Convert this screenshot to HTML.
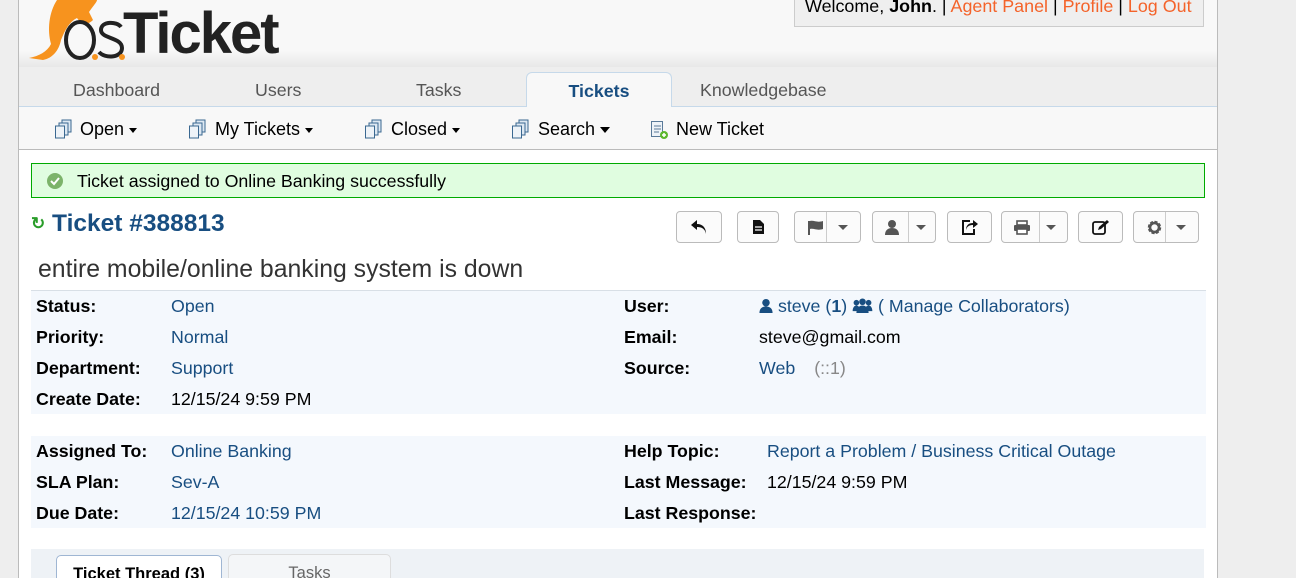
<!DOCTYPE html>
<html><head><meta charset="utf-8"><style>
*{margin:0;padding:0;box-sizing:border-box}
html,body{width:1296px;height:578px;overflow:hidden}
body{background:#eee;font-family:"Liberation Sans",Arial,sans-serif;font-size:17.8px;color:#000;position:relative}
.a{position:absolute}
#c{left:18px;top:0;width:1200px;height:578px;background:#fff;border-left:1px solid #bbb;border-right:1px solid #bbb;overflow:hidden}
#hd{left:0;top:0;width:1198px;height:67px;background:linear-gradient(#f8f8f8 75%,#e8e8e8)}
#wel{left:775px;top:-4px;width:410px;height:31px;background:#efefef;border:1px solid #ccc;border-top:none;font-size:17.9px;padding:0 0 0 10px;line-height:20px;color:#000;white-space:nowrap}
#wel a{color:#f4632a;text-decoration:none}
#nav{left:0;top:67px;width:1198px;height:40px;background:#eee;border-bottom:1px solid #c6d9ea}
.tab{top:13px;font-size:17.8px;color:#555}
#act{left:507px;top:5px;width:146px;height:36px;background:#f8f8f8;border:1px solid #c6d9ea;border-bottom:none;border-radius:6px 6px 0 0;text-align:center;font-weight:bold;color:#184e81;padding-top:8px}
#sub{left:0;top:107px;width:1198px;height:43px;background:#f8f8f8;border-bottom:1px solid #bbb}
.si{top:12px;font-size:18px;color:#000}
.car{display:inline-block;width:0;height:0;border-left:4px solid transparent;border-right:4px solid transparent;border-top:5px solid #000;vertical-align:middle;margin-left:5px}
#msg{left:12px;top:163px;width:1174px;height:35px;background:#e0fde0;border:1px solid #0a0;padding:7px 0 0 45px;font-size:17.8px}
.btn{top:211px;height:32px;border:1px solid #bbb;border-radius:4px;background:#fbfbfb}
.btn .d{position:absolute;top:0;bottom:0;border-left:1px solid #ccc}
.btn .dc{position:absolute;top:13px;width:0;height:0;border-left:5px solid transparent;border-right:5px solid transparent;border-top:5px solid #555}
.tbl{left:12px;width:1175px;background:#f4f8fd}
.l{font-weight:bold;position:absolute;font-size:17.8px}
.v{position:absolute;color:#184e81;font-size:17.8px}
.k{position:absolute;color:#000;font-size:17.8px}
</style></head><body>
<div id="c" class="a">
 <div id="hd" class="a">
  <svg class="a" style="left:8px;top:0" width="70" height="62" viewBox="0 0 70 62"><path d="M30 0 C22 12 20 30 24 44 C20 52 12 56 2 58 L16 60 C26 58 32 50 34 40 C38 30 42 22 50 18 C54 24 60 26 66 20 L62 12 C66 6 70 2 70 0 Z" fill="#f7931e"/></svg>
  <svg class="a" style="left:44px;top:18px" width="62" height="44" viewBox="0 0 62 44"><ellipse cx="17" cy="22" rx="14" ry="18" fill="none" stroke="#222" stroke-width="4"/><path d="M58 9 C54 3 38 3 38 12 C38 21 59 19 59 30 C59 40 42 41 36 34" fill="none" stroke="#222" stroke-width="4"/><circle cx="32" cy="39" r="3" fill="#f7931e"/><circle cx="59" cy="39" r="3" fill="#f7931e"/></svg>
  <div class="a" style="left:104px;top:4px;font-size:58px;font-weight:bold;color:#222;letter-spacing:-2px;line-height:60px">Ticket</div>
  <div id="wel" class="a">Welcome, <b>John</b>. | <a>Agent Panel</a> | <a>Profile</a> | <a>Log Out</a></div>
 </div>
 <div id="nav" class="a">
  <div class="a tab" style="left:54px">Dashboard</div>
  <div class="a tab" style="left:236px">Users</div>
  <div class="a tab" style="left:397px">Tasks</div>
  <div id="act" class="a">Tickets</div>
  <div class="a tab" style="left:681px">Knowledgebase</div>
 </div>
 <div id="sub" class="a">
  <svg class="a" style="left:35px;top:12px" width="20" height="20" viewBox="0 0 20 20"><rect x="8" y="1" width="9" height="12" fill="#dde8f2" stroke="#3a6891"/><rect x="5" y="4" width="9" height="12" fill="#dde8f2" stroke="#3a6891"/><rect x="1.5" y="7" width="9" height="12" fill="#eef3f8" stroke="#3a6891"/></svg>
  <div class="a si" style="left:61px">Open<span class="car"></span></div>
  <svg class="a" style="left:169px;top:12px" width="20" height="20" viewBox="0 0 20 20"><rect x="8" y="1" width="9" height="12" fill="#dde8f2" stroke="#3a6891"/><rect x="5" y="4" width="9" height="12" fill="#dde8f2" stroke="#3a6891"/><rect x="1.5" y="7" width="9" height="12" fill="#eef3f8" stroke="#3a6891"/></svg>
  <div class="a si" style="left:196px">My Tickets<span class="car"></span></div>
  <svg class="a" style="left:345px;top:12px" width="20" height="20" viewBox="0 0 20 20"><rect x="8" y="1" width="9" height="12" fill="#dde8f2" stroke="#3a6891"/><rect x="5" y="4" width="9" height="12" fill="#dde8f2" stroke="#3a6891"/><rect x="1.5" y="7" width="9" height="12" fill="#eef3f8" stroke="#3a6891"/></svg>
  <div class="a si" style="left:372px">Closed<span class="car"></span></div>
  <svg class="a" style="left:492px;top:12px" width="20" height="20" viewBox="0 0 20 20"><rect x="8" y="1" width="9" height="12" fill="#dde8f2" stroke="#3a6891"/><rect x="5" y="4" width="9" height="12" fill="#dde8f2" stroke="#3a6891"/><rect x="1.5" y="7" width="9" height="12" fill="#eef3f8" stroke="#3a6891"/></svg>
  <div class="a si" style="left:519px">Search<span class="car" style="border-width:6px 5px 0 5px"></span></div>
  <svg class="a" style="left:631px;top:13px" width="20" height="20" viewBox="0 0 20 20"><rect x="1.5" y="1.5" width="11" height="15" fill="#eef3f8" stroke="#5a7a99"/><path d="M4 6h7M4 9h7M4 12h5" stroke="#5a7a99"/><circle cx="14" cy="15" r="4" fill="#5cb82c"/><path d="M14 13v4M12 15h4" stroke="#fff" stroke-width="1.5"/></svg>
  <div class="a si" style="left:657px">New Ticket</div>
 </div>
 <div id="msg" class="a"><svg class="a" style="left:14px;top:8px" width="18" height="18" viewBox="0 0 18 18"><circle cx="9" cy="9" r="8" fill="#7cb36a"/><path d="M5 9l3 3 5-6" stroke="#fff" stroke-width="2" fill="none"/></svg>Ticket assigned to Online Banking successfully</div>
 <div class="a" style="left:12px;top:210px;font-size:24.5px;font-weight:bold;color:#184e81"><span style="color:#2a9d2a;font-size:17px;vertical-align:2px">&#x21bb;</span> Ticket #388813</div>
 <div class="a" style="left:19px;top:256px;font-size:24.8px;color:#333">entire mobile/online banking system is down</div>

 <div class="a btn" style="left:657px;width:46px"><svg class="a" style="left:13px;top:7px" width="18" height="16" viewBox="0 0 18 16"><path d="M7 1L1 6l6 5V8c5 0 8 2 9 7 0-6-3-10-9-10z" fill="#111"/></svg></div>
 <div class="a btn" style="left:718px;width:42px"><svg class="a" style="left:14px;top:7px" width="13" height="16" viewBox="0 0 13 16"><path d="M1 1h7l4 4v10H1z" fill="#111"/><path d="M3 8h7M3 11h7" stroke="#fff" stroke-width="1.3"/></svg></div>
 <div class="a btn" style="left:775px;width:67px"><svg class="a" style="left:12px;top:8px" width="18" height="15" viewBox="0 0 18 15"><path d="M2 1v14" stroke="#555" stroke-width="2"/><path d="M3 1c4-1 7 2 13 0v8c-6 2-9-1-13 0z" fill="#555"/></svg><div class="d" style="left:31px"></div><div class="dc" style="left:43px"></div></div>
 <div class="a btn" style="left:853px;width:64px"><svg class="a" style="left:12px;top:7px" width="14" height="16" viewBox="0 0 14 16"><circle cx="7" cy="5" r="4" fill="#555"/><path d="M0 16c0-5 3-7 7-7s7 2 7 7z" fill="#555"/></svg><div class="d" style="left:35px"></div><div class="dc" style="left:43px"></div></div>
 <div class="a btn" style="left:928px;width:45px"><svg class="a" style="left:13px;top:7px" width="17" height="16" viewBox="0 0 17 16"><path d="M9 2H2v13h11V10" fill="none" stroke="#111" stroke-width="2"/><path d="M5 11c0-5 3-7 7-7V1l5 4-5 4V6c-3 0-6 1-7 5z" fill="#111"/></svg></div>
 <div class="a btn" style="left:982px;width:67px"><svg class="a" style="left:11px;top:8px" width="18" height="15" viewBox="0 0 18 15"><rect x="4" y="1" width="10" height="4" fill="none" stroke="#555" stroke-width="1.6"/><rect x="1" y="5" width="16" height="6" rx="1" fill="#555"/><rect x="4" y="9" width="10" height="5" fill="#fff" stroke="#555" stroke-width="1.6"/></svg><div class="d" style="left:37px"></div><div class="dc" style="left:44px"></div></div>
 <div class="a btn" style="left:1059px;width:45px"><svg class="a" style="left:13px;top:7px" width="18" height="16" viewBox="0 0 18 16"><rect x="1" y="3" width="12" height="12" rx="2" fill="none" stroke="#111" stroke-width="1.8"/><path d="M6 11l1-3 8-7 2 2-8 7z" fill="#111"/></svg></div>
 <div class="a btn" style="left:1114px;width:66px"><svg class="a" style="left:12px;top:7px" width="17" height="17" viewBox="0 0 17 17"><circle cx="8.5" cy="8.5" r="5" fill="none" stroke="#555" stroke-width="3.5" stroke-dasharray="2.6 1.3"/><circle cx="8.5" cy="8.5" r="4.5" fill="none" stroke="#555" stroke-width="2.5"/></svg><div class="d" style="left:31px"></div><div class="dc" style="left:42px"></div></div>

 <div class="a tbl" style="top:290px;height:124px;border-top:1px solid #d8dfe6">
  <div class="l" style="left:5px;top:5px">Status:</div><div class="v" style="left:140px;top:5px">Open</div>
  <div class="l" style="left:5px;top:36px">Priority:</div><div class="v" style="left:140px;top:36px">Normal</div>
  <div class="l" style="left:5px;top:67px">Department:</div><div class="v" style="left:140px;top:67px">Support</div>
  <div class="l" style="left:5px;top:98px">Create Date:</div><div class="k" style="left:140px;top:98px">12/15/24 9:59 PM</div>
  <div class="l" style="left:593px;top:5px">User:</div>
  <div class="v" style="left:728px;top:5px"><svg width="14" height="15" viewBox="0 0 14 16" style="vertical-align:-1px"><circle cx="7" cy="5" r="4" fill="#184e81"/><path d="M0 16c0-5 3-7 7-7s7 2 7 7z" fill="#184e81"/></svg> steve (<b style="color:#184e81">1</b>) <svg width="21" height="15" viewBox="0 0 21 16" style="vertical-align:-1px"><circle cx="4" cy="5" r="3" fill="#184e81"/><circle cx="17" cy="5" r="3" fill="#184e81"/><circle cx="10.5" cy="4" r="3.5" fill="#184e81"/><path d="M0 14c0-4 2-6 4-6s4 2 4 6zM13 14c0-4 2-6 4-6s4 2 4 6z" fill="#184e81"/><path d="M4 16c0-5 3-8 6.5-8S17 11 17 16z" fill="#184e81"/></svg> ( Manage Collaborators)</div>
  <div class="l" style="left:593px;top:36px">Email:</div><div class="k" style="left:728px;top:36px">steve@gmail.com</div>
  <div class="l" style="left:593px;top:67px">Source:</div><div class="v" style="left:728px;top:67px">Web <span style="color:#888;margin-left:14px">(::1)</span></div>
 </div>
 <div class="a tbl" style="top:436px;height:92px">
  <div class="l" style="left:5px;top:5px">Assigned To:</div><div class="v" style="left:140px;top:5px">Online Banking</div>
  <div class="l" style="left:5px;top:36px">SLA Plan:</div><div class="v" style="left:140px;top:36px">Sev-A</div>
  <div class="l" style="left:5px;top:67px">Due Date:</div><div class="v" style="left:140px;top:67px">12/15/24 10:59 PM</div>
  <div class="l" style="left:593px;top:5px">Help Topic:</div><div class="v" style="left:736px;top:5px">Report a Problem / Business Critical Outage</div>
  <div class="l" style="left:593px;top:36px">Last Message:</div><div class="k" style="left:736px;top:36px">12/15/24 9:59 PM</div>
  <div class="l" style="left:593px;top:67px">Last Response:</div>
 </div>
 <div class="a" style="left:12px;top:549px;width:1173px;height:29px;background:#eef2f6">
  <div class="a" style="left:25px;top:6px;width:166px;height:30px;background:#fff;border:1px solid #9fb6d3;border-radius:5px 5px 0 0;font-weight:bold;font-size:16.5px;text-align:center;padding-top:9px;color:#000">Ticket Thread (3)</div>
  <div class="a" style="left:197px;top:5px;width:163px;height:30px;background:#f4f6f8;border:1px solid #ddd;border-radius:5px 5px 0 0;font-size:16.5px;text-align:center;padding-top:9px;color:#666">Tasks</div>
 </div>
</div>
</body></html>
